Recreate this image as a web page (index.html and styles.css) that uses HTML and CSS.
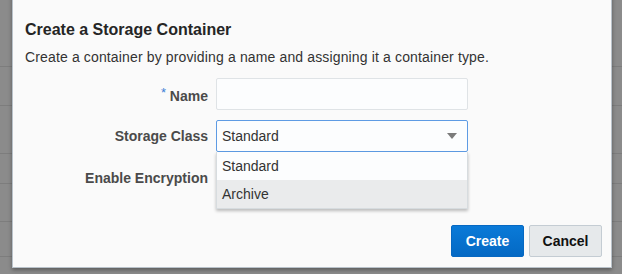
FILE: index.html
```html
<!DOCTYPE html>
<html>
<head>
<meta charset="utf-8">
<link rel="stylesheet" href="styles.css">
</head>
<body>
<div class="backdrop">
  <div class="bg-row r1"></div>
  <div class="bg-row r2"></div>
  <div class="bg-row r3"></div>
  <div class="bg-row r4"></div>
  <div class="bg-row r5"></div>
  <div class="bg-row r6"></div>
  <div class="bg-row r7"></div>
</div>
<div class="dialog">
  <h1 class="title">Create a Storage Container</h1>
  <p class="desc">Create a container by providing a name and assigning it a container type.</p>
  <div class="form">
    <label class="label"><span class="req">*</span> Name</label>
    <div class="control"><div class="input"></div></div>
    <label class="label">Storage Class</label>
    <div class="control">
      <div class="select">
        <span>Standard</span>
        <svg class="arrow" width="10" height="6" viewBox="0 0 10 6"><path d="M0 0 H10 L5 6 Z" fill="#7b7b7b"/></svg>
      </div>
      <ul class="listbox">
        <li class="opt">Standard</li>
        <li class="opt hover">Archive</li>
      </ul>
    </div>
    <label class="label">Enable Encryption</label>
    <div class="control"></div>
  </div>
  <div class="footer">
    <button class="btn primary">Create</button>
    <button class="btn secondary">Cancel</button>
  </div>
</div>
</body>
</html>
```
FILE: styles.css
```css
html, body {
  margin: 0;
  padding: 0;
  width: 622px;
  height: 274px;
  overflow: hidden;
  background: #8b8b8b;
  font-family: Arial, "Liberation Sans", sans-serif;
}
.backdrop {
  display: flex;
  flex-direction: column;
}
.bg-row {
  border-bottom: 1px solid #7d7d7d;
  flex: none;
}
.r1 { height: 66px; }
.r2 { height: 38px; }
.r3 { height: 47px; }
.r4 { height: 29px; }
.r5 { height: 37px; }
.r6 { height: 34px; }
.r7 { height: 30px; border-bottom: none; }

.dialog {
  position: absolute;
  left: 12px;
  top: -20px;
  width: 600px;
  height: 288px;
  background: #fafafa;
  border: 1px solid #b9c2ca;
  box-shadow: 0 2px 4px rgba(0,0,0,0.35);
  padding: 0 0 0 12px;
  box-sizing: border-box;
  display: flex;
  flex-direction: column;
}
.title {
  margin: 39px 0 0 0;
  font-size: 16px;
  line-height: 20px;
  font-weight: bold;
  color: #252525;
}
.desc {
  margin: 8px 0 0 0;
  font-size: 14px;
  letter-spacing: 0.14px;
  line-height: 18px;
  color: #333333;
}
.form {
  display: grid;
  grid-template-columns: 183px 252px;
  column-gap: 8px;
  row-gap: 10px;
  grid-template-rows: 32px 32px 32px;
  margin-top: 12px;
}
.label {
  font-size: 14px;
  font-weight: bold;
  color: #4a4a4a;
  text-align: right;
  align-self: center;
}
.req {
  color: #3a7fd5;
  font-weight: normal;
  font-size: 13px;
  vertical-align: 4px;
}
.control { position: relative; }
.input {
  height: 32px;
  box-sizing: border-box;
  border: 1px solid #dfe3e6;
  border-radius: 2px;
  background: #fcfdfe;
}
.select {
  height: 32px;
  box-sizing: border-box;
  border: 1px solid #5e9be4;
  border-radius: 2px;
  background: #fcfdfe;
  display: flex;
  align-items: center;
  justify-content: space-between;
  padding: 0 6px 0 5px;
  font-size: 14px;
  color: #333;
}
.arrow { margin-right: 4px; }
.listbox {
  position: absolute;
  left: 0;
  top: 32px;
  width: 252px;
  box-sizing: border-box;
  margin: 0;
  padding: 0;
  list-style: none;
  background: #fcfdfe;
  border: 1px solid #d7dcdf;
  border-top: none;
  box-shadow: 0 2px 3px rgba(0,0,0,0.25);
  z-index: 2;
}
.opt {
  height: 28px;
  line-height: 28px;
  padding-left: 5px;
  font-size: 14px;
  color: #333;
}
.opt.hover { background: #eaebec; }

.footer {
  margin-top: auto;
  display: flex;
  justify-content: flex-end;
  gap: 5px;
  padding: 0 9px 10px 0;
}
.btn {
  height: 32px;
  width: 73px;
  box-sizing: border-box;
  border-radius: 2px;
  font-family: Arial, "Liberation Sans", sans-serif;
  font-size: 14px;
  font-weight: bold;
  padding: 0;
}
.primary {
  background: linear-gradient(#0a7ad8, #0469c4);
  border: 1px solid #0668c2;
  color: #fff;
}
.secondary {
  background: #e6e9eb;
  border: 1px solid #c4ccd3;
  color: #111;
}
```
